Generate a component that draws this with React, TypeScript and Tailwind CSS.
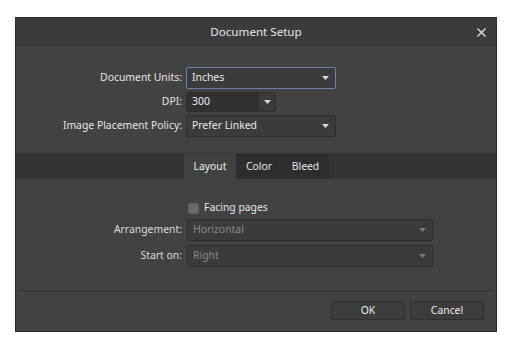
import React from 'react'

function Caret({ dim }: { dim?: boolean }) {
  return (
    <svg width="7" height="4" viewBox="0 0 7 4" className="shrink-0">
      <path d="M0 0H7L3.5 4Z" fill={dim ? '#7a7a7a' : '#d6d6d6'} />
    </svg>
  )
}

function Select({
  value,
  width,
  focused,
  dim
}: {
  value: string
  width: string
  focused?: boolean
  dim?: boolean
}) {
  return (
    <div
      className={`${width} h-[22px] flex items-center justify-between pl-[5px] pr-[6px] rounded-[2px] border ${
        focused ? 'border-[#6b7fb3] bg-[#3b3b3b]' : 'border-[#2e2e2e] bg-[#3b3b3b]'
      } ${dim ? 'text-[#8a8a8a]' : 'text-[#ececec]'}`}
    >
      <span>{value}</span>
      <Caret dim={dim} />
    </div>
  )
}

function Label({ children }: { children: React.ReactNode }) {
  return <div className="text-right pr-[4px] text-[#e6e6e6]">{children}</div>
}

export default function App() {
  return (
    <div
      className="w-[513px] h-[347px] bg-white pt-[17px] pl-[15px] text-[10.4px]"
      style={{ fontFamily: '"Noto Sans", "Open Sans", sans-serif' }}
    >
      <div className="w-[482px] h-[315px] bg-[#424242] border border-[#2a2a2a] flex flex-col">
        {/* title bar */}
        <div className="h-[28px] bg-[#3b3b3b] flex items-center relative">
          <div className="flex-1 text-center text-[11.6px] text-[#e8e8e8]">Document Setup</div>
          <svg
            width="9"
            height="9"
            viewBox="0 0 9 9"
            className="absolute right-[10px] top-[10px]"
          >
            <path d="M0.5 0.5L8.5 8.5M8.5 0.5L0.5 8.5" stroke="#e0e0e0" strokeWidth="1.3" />
          </svg>
        </div>

        {/* general settings */}
        <div className="pt-[21px] pb-[16px] grid grid-cols-[170px_auto] items-center gap-y-[3px]">
          <Label>Document Units:</Label>
          <Select value="Inches" width="w-[150px]" focused />
          <Label>DPI:</Label>
          <div className="w-[90px] h-[20px] flex rounded-[2px] border border-[#2e2e2e] overflow-hidden">
            <div className="flex-1 bg-[#313131] pl-[5px] flex items-center text-[#ececec]">300</div>
            <div className="w-[17px] border-l border-[#2e2e2e] bg-[#3a3a3a] flex items-center justify-center">
              <Caret />
            </div>
          </div>
          <Label>Image Placement Policy:</Label>
          <Select value="Prefer Linked" width="w-[150px]" />
        </div>

        {/* tab strip */}
        <div className="h-[26px] bg-[#333333] flex pl-[168px]">
          <div className="flex bg-[#2d2d2d] mt-[1px]">
            <div className="w-[52px] bg-[#414141] text-[#eeeeee] flex items-center justify-center">
              Layout
            </div>
            <div className="w-[46px] text-[#e6e6e6] flex items-center justify-center">Color</div>
            <div className="w-[47px] text-[#e6e6e6] flex items-center justify-center">Bleed</div>
          </div>
        </div>

        {/* layout tab */}
        <div className="pt-[22px] grid grid-cols-[171px_auto] items-center gap-y-[4px]">
          <div />
          <div className="flex items-center gap-[5px] ml-[1px] h-[14px]">
            <div className="w-[11px] h-[11px] rounded-[2px] bg-[#6a6a6a] border border-[#5e5e5e]" />
            <span className="text-[#e6e6e6]">Facing pages</span>
          </div>
          <div className="text-right pr-[5px] text-[#dcdcdc]">Arrangement:</div>
          <Select value="Horizontal" width="w-[246px]" dim />
          <div className="text-right pr-[5px] text-[#dcdcdc]">Start on:</div>
          <Select value="Right" width="w-[246px]" dim />
        </div>

        {/* footer */}
        <div className="mt-auto">
          <div className="mx-[4px] h-[2px] border-t border-[#2b2b2b] border-b border-b-[#4a4a4a]" />
          <div className="h-[38px] flex justify-end items-start pt-[8px] pr-[12px] gap-[5px]">
            <div className="w-[74px] h-[19px] rounded-[2px] bg-[#3c3c3c] border border-[#303030] flex items-center justify-center text-[#ececec]">
              OK
            </div>
            <div className="w-[74px] h-[19px] rounded-[2px] bg-[#3c3c3c] border border-[#303030] flex items-center justify-center text-[#ececec]">
              Cancel
            </div>
          </div>
        </div>
      </div>
    </div>
  )
}
